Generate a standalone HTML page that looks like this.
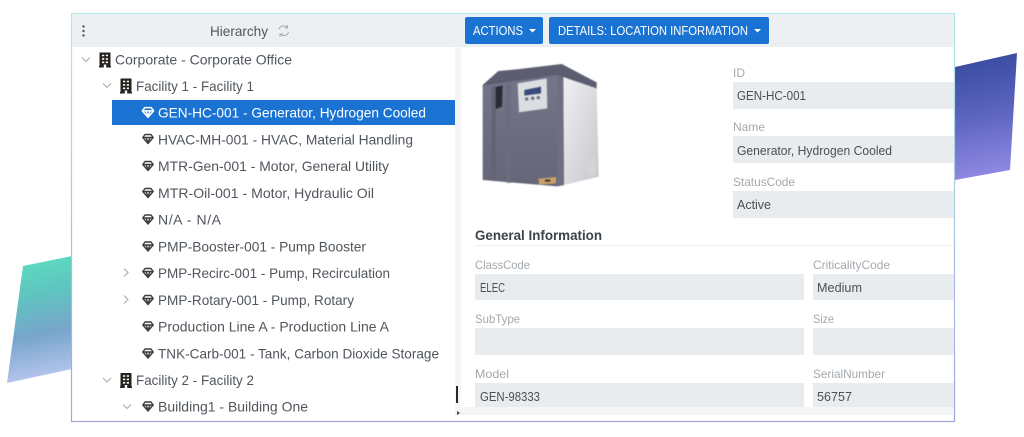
<!DOCTYPE html>
<html><head><meta charset="utf-8"><title>Hierarchy</title>
<style>
html,body{margin:0;padding:0;background:#fff;width:1024px;height:437px;overflow:hidden}
svg{display:block}
#root{filter:blur(0.35px)}
text{font-family:"Liberation Sans",sans-serif;font-size:14px;fill:#50565d}
.l{font-size:12px;fill:#a3a9ae}
.v{font-size:12.5px;fill:#495057}
</style></head><body>
<svg id="root" width="1024" height="437" viewBox="0 0 1024 437" xmlns="http://www.w3.org/2000/svg">
<defs>
<linearGradient id="gl" x1="0.45" y1="0" x2="0.55" y2="1"><stop offset="0" stop-color="#5cdcc0"/><stop offset=".3" stop-color="#5fc4c0"/><stop offset=".62" stop-color="#78a5cc"/><stop offset="1" stop-color="#bcc9f0"/></linearGradient>
<linearGradient id="gr" x1="0" y1="0" x2="0.1" y2="1"><stop offset="0" stop-color="#34489c"/><stop offset=".5" stop-color="#5a63bd"/><stop offset="1" stop-color="#8e88e2"/></linearGradient>
<linearGradient id="bd" x1="0" y1="0" x2="0" y2="1"><stop offset="0" stop-color="#b2e9e6"/><stop offset="1" stop-color="#a0a6d8"/></linearGradient>
<linearGradient id="side" x1="0" y1="0" x2="1" y2="1"><stop offset="0" stop-color="#f0f0f2"/><stop offset="1" stop-color="#c6c7cb"/></linearGradient>
<linearGradient id="front" x1="0" y1="0" x2="0" y2="1"><stop offset="0" stop-color="#74768a"/><stop offset="1" stop-color="#656677"/></linearGradient>
<symbol id="bld" viewBox="0 0 12 15"><path fill="#26231f" fill-rule="evenodd" d="M0.500 0h11v13.500h.5V15H0v-1.500h.5zM3 2.200v1.600h2.200V2.200zM6.800 2.200v1.600H9V2.200zM3 5.600v1.600h2.200V5.600zM6.800 5.600v1.600H9V5.600zM3 9v1.600h2.200V9zM6.800 9v1.600H9V9zM4.800 12v3h2.400v-3z"/></symbol>
<symbol id="gem" viewBox="0 0 12 11"><path fill="none" stroke="currentColor" stroke-width="1.400" stroke-linejoin="round" d="M3 1h6l2.200 3L6 10 .8 4zM1 4h10M4 4l2 5 2-5"/></symbol>
</defs>

<polygon points="23,266 72,256 72,369 7,383" fill="url(#gl)"/>
<polygon points="955,67 1017,53 1010,170 955,180" fill="url(#gr)"/>

<rect x="71.500" y="13.500" width="883" height="408" fill="#fff" stroke="url(#bd)" stroke-width="1.200"/>
<rect x="72" y="14" width="882" height="33" fill="#edf0f2"/>
<rect x="455" y="47" width="6" height="368" fill="#f4f5f7"/>
<rect x="461" y="407" width="493" height="8" fill="#f4f5f7"/>

<circle cx="83.500" cy="26.500" r="1.200" fill="#555"/><circle cx="83.500" cy="31" r="1.200" fill="#555"/><circle cx="83.500" cy="35.500" r="1.200" fill="#555"/>
<text x="210" y="36" textLength="58" lengthAdjust="spacingAndGlyphs">Hierarchy</text>
<path d="M279 29.500a4.600 4.600 0 0 1 8-2M288.500 32a4.600 4.600 0 0 1-8 2M287.500 25v3h-3M280 37v-3h3" fill="none" stroke="#a5abb1" stroke-width="1"/>

<rect x="112" y="100" width="343" height="25" fill="#1a73d2"/>

<g fill="none" stroke="#a9adb1" stroke-width="1.100">
<path d="M82 57.500l4 4 4-4M103 83.500l4 4 4-4M103 378l4 4 4-4M123 404.500l4 4 4-4M124 268.500l4 4-4 4M124 295.500l4 4-4 4"/>
</g>

<use href="#bld" x="99" y="52.500" width="12" height="15"/>
<use href="#bld" x="120" y="78.500" width="12" height="15"/>
<use href="#bld" x="120" y="373" width="12" height="15"/>

<g color="#fff"><use href="#gem" x="141.500" y="106.500" width="13" height="12"/></g>
<g color="#3f3f42">
<use href="#gem" x="142" y="133.500" width="12" height="11"/>
<use href="#gem" x="142" y="160.500" width="12" height="11"/>
<use href="#gem" x="142" y="187.500" width="12" height="11"/>
<use href="#gem" x="142" y="214" width="12" height="11"/>
<use href="#gem" x="142" y="241" width="12" height="11"/>
<use href="#gem" x="142" y="267.500" width="12" height="11"/>
<use href="#gem" x="142" y="294.500" width="12" height="11"/>
<use href="#gem" x="142" y="321" width="12" height="11"/>
<use href="#gem" x="142" y="348" width="12" height="11"/>
<use href="#gem" x="142" y="401" width="12" height="11"/>
</g>

<text x="115" y="64.500" textLength="177" lengthAdjust="spacingAndGlyphs">Corporate - Corporate Office</text>
<text x="136" y="91" textLength="118" lengthAdjust="spacingAndGlyphs">Facility 1 - Facility 1</text>
<text x="158" y="117.500" textLength="268" lengthAdjust="spacingAndGlyphs" style="fill:#fff">GEN-HC-001 - Generator, Hydrogen Cooled</text>
<text x="158" y="144.500" textLength="255" lengthAdjust="spacingAndGlyphs">HVAC-MH-001 - HVAC, Material Handling</text>
<text x="158" y="171" textLength="231" lengthAdjust="spacingAndGlyphs">MTR-Gen-001 - Motor, General Utility</text>
<text x="158" y="198" textLength="216" lengthAdjust="spacingAndGlyphs">MTR-Oil-001 - Motor, Hydraulic Oil</text>
<text x="158" y="224.500" textLength="63" lengthAdjust="spacing">N/A - N/A</text>
<text x="158" y="251.500" textLength="208" lengthAdjust="spacingAndGlyphs">PMP-Booster-001 - Pump Booster</text>
<text x="158" y="278" textLength="232" lengthAdjust="spacingAndGlyphs">PMP-Recirc-001 - Pump, Recirculation</text>
<text x="158" y="305" textLength="196" lengthAdjust="spacingAndGlyphs">PMP-Rotary-001 - Pump, Rotary</text>
<text x="158" y="331.500" textLength="231" lengthAdjust="spacingAndGlyphs">Production Line A - Production Line A</text>
<text x="158" y="358.500" textLength="281" lengthAdjust="spacingAndGlyphs">TNK-Carb-001 - Tank, Carbon Dioxide Storage</text>
<text x="136" y="385" textLength="118" lengthAdjust="spacingAndGlyphs">Facility 2 - Facility 2</text>
<text x="158" y="411.500" textLength="150" lengthAdjust="spacingAndGlyphs">Building1 - Building One</text>

<rect x="456" y="386" width="2" height="17" fill="#2b2523"/>
<path d="M457 411l3 2-3 2z" fill="#444"/>

<rect x="465" y="17" width="78" height="27" rx="2" fill="#1a73d2"/>
<rect x="549" y="17" width="220" height="27" rx="2" fill="#1a73d2"/>
<text x="473" y="35" textLength="50" lengthAdjust="spacingAndGlyphs" style="fill:#fff;font-size:12.500px">ACTIONS</text>
<path d="M529 29h7l-3.500 3.500z" fill="#fff"/>
<text x="558" y="35" textLength="190" lengthAdjust="spacingAndGlyphs" style="fill:#fff;font-size:12.500px">DETAILS: LOCATION INFORMATION</text>
<path d="M754 29h7l-3.500 3.500z" fill="#fff"/>

<svg x="470" y="55" width="130" height="140" viewBox="0 0 390 420">
<g style="filter:blur(1.500px)">
<polygon points="38,90 85,48 140,43 275,27 380,82 380,102 280,68 120,85 38,98" fill="#5c5d70"/>
<polygon points="38,92 262,60 280,66 282,390 262,394 38,375" fill="url(#front)"/>
<polygon points="280,66 380,100 386,365 282,390" fill="url(#side)"/>
<polygon points="262,60 280,66 282,390 262,394" fill="#6e6f82"/>
<polygon points="64,95 78,93 78,378 64,376" fill="#626476"/>
<polygon points="108,88 122,86 122,384 108,382" fill="#6a6c80"/>
<polygon points="77,96 98,91 96,155 77,162" fill="#2b2b33"/>
<polygon points="143,85 230,70 232,160 147,172" fill="#dcdde1"/>
<polygon points="163,105 213,95 213,115 163,122" fill="#3a4a78"/>
<circle cx="170" cy="132" r="5" fill="#6b6f80"/><circle cx="188" cy="130" r="5" fill="#6b6f80"/><circle cx="205" cy="128" r="5" fill="#6b6f80"/>
<polygon points="205,371 258,366 258,385 208,389" fill="#c9a06a"/>
<rect x="225" y="374" width="16" height="6" fill="#3d3226"/>
<rect x="352" y="310" width="26" height="50" fill="#d3d4d8"/>
</g>
</svg>

<rect x="733" y="82" width="221" height="27" fill="#e9ecef"/>
<rect x="733" y="136" width="221" height="27" fill="#e9ecef"/>
<rect x="733" y="191" width="221" height="27" fill="#e9ecef"/>
<text class="l" x="733" y="77" textLength="12" lengthAdjust="spacingAndGlyphs">ID</text>
<text class="v" x="737" y="100" textLength="69" lengthAdjust="spacingAndGlyphs">GEN-HC-001</text>
<text class="l" x="733" y="131" textLength="32" lengthAdjust="spacingAndGlyphs">Name</text>
<text class="v" x="737" y="155" textLength="155" lengthAdjust="spacingAndGlyphs">Generator, Hydrogen Cooled</text>
<text class="l" x="733" y="186" textLength="62" lengthAdjust="spacingAndGlyphs">StatusCode</text>
<text class="v" x="737" y="209" textLength="34" lengthAdjust="spacingAndGlyphs">Active</text>

<text x="475" y="240" textLength="127" lengthAdjust="spacingAndGlyphs" style="font-weight:bold;font-size:13.500px;fill:#3d4349">General Information</text>
<rect x="475" y="245" width="479" height="1" fill="#eceef0"/>

<rect x="475" y="274" width="329" height="26" fill="#e9ecef"/>
<rect x="813" y="274" width="141" height="26" fill="#e9ecef"/>
<rect x="475" y="328" width="329" height="27" fill="#e9ecef"/>
<rect x="813" y="328" width="141" height="27" fill="#e9ecef"/>
<rect x="475" y="383" width="329" height="24" fill="#e9ecef"/>
<rect x="813" y="383" width="141" height="24" fill="#e9ecef"/>
<text class="l" x="475" y="269" textLength="55" lengthAdjust="spacingAndGlyphs">ClassCode</text>
<text class="l" x="813" y="269" textLength="77" lengthAdjust="spacingAndGlyphs">CriticalityCode</text>
<text class="v" x="480" y="292" textLength="25" lengthAdjust="spacingAndGlyphs">ELEC</text>
<text class="v" x="817" y="292" textLength="45" lengthAdjust="spacingAndGlyphs">Medium</text>
<text class="l" x="475" y="323" textLength="45" lengthAdjust="spacingAndGlyphs">SubType</text>
<text class="l" x="813" y="323" textLength="21" lengthAdjust="spacingAndGlyphs">Size</text>
<text class="l" x="475" y="378" textLength="34" lengthAdjust="spacingAndGlyphs">Model</text>
<text class="l" x="813" y="378" textLength="72" lengthAdjust="spacingAndGlyphs">SerialNumber</text>
<text class="v" x="480" y="401" textLength="60" lengthAdjust="spacingAndGlyphs">GEN-98333</text>
<text class="v" x="817" y="401" textLength="35" lengthAdjust="spacingAndGlyphs">56757</text>
</svg>
</body></html>
